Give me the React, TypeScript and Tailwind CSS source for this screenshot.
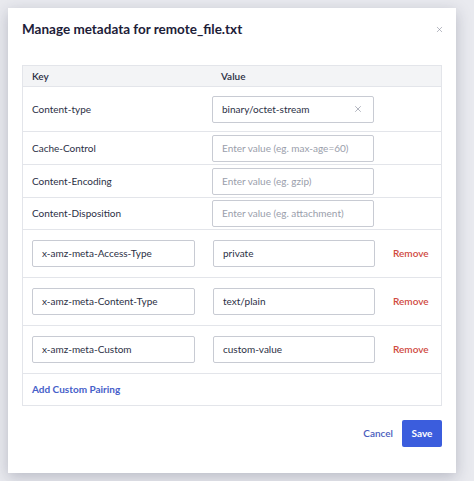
import { X } from 'lucide-react';

const fixedRows = [
  { key: 'Cache-Control', placeholder: 'Enter value (eg. max-age=60)', h: 'h-[33px]' },
  { key: 'Content-Encoding', placeholder: 'Enter value (eg. gzip)', h: 'h-[33px]' },
  { key: 'Content-Disposition', placeholder: 'Enter value (eg. attachment)', h: 'h-[32px]' },
];

const customRows = [
  { key: 'x-amz-meta-Access-Type', value: 'private', h: 'h-[48px]' },
  { key: 'x-amz-meta-Content-Type', value: 'text/plain', h: 'h-[48px]' },
  { key: 'x-amz-meta-Custom', value: 'custom-value', h: 'h-[48px]' },
];

const inputBox =
  'h-[27px] rounded-[2px] border border-[#c8cbd3] bg-white flex items-center px-[9px] text-[10px]';

export default function App() {
  return (
    <div
      className="w-[474px] h-[481px] bg-[#e9eaef] pl-[8px] pt-[8px] overflow-hidden"
      style={{ fontFamily: 'Lato, "Open Sans", sans-serif' }}
    >
      <div className="w-[448px] h-[465px] bg-white shadow-[0_4px_14px_rgba(40,45,70,0.25)] px-[14px] pt-[12px] text-[#2b2f45]">
        {/* Header */}
        <div className="flex items-center justify-between h-[18px]">
          <h2 className="text-[13.5px] font-bold text-[#1d2038]">
            Manage metadata for remote_file.txt
          </h2>
          <X className="w-[9px] h-[9px] text-[#7a7f90] mr-[-2px]" strokeWidth={1.4} />
        </div>

        {/* Table */}
        <div className="mt-[27px] border border-[#e3e5ea] text-[10px]">
          <div className="h-[20px] bg-[#f3f4f6] flex items-center font-semibold text-[#2b2f45]">
            <div className="w-[190px] pl-[9px]">Key</div>
            <div className="pl-[8px]">Value</div>
          </div>

          <div className="h-[45px] flex items-center border-t border-[#e3e5ea]">
            <div className="w-[181px] pl-[9px]">Content-type</div>
            <div className={`${inputBox} w-[162px] justify-between ml-[8px]`}>
              <span>binary/octet-stream</span>
              <X className="w-[10px] h-[10px] text-[#7a7f90] mr-[1px]" strokeWidth={1.4} />
            </div>
          </div>

          {fixedRows.map((r) => (
            <div key={r.key} className={`${r.h} flex items-center border-t border-[#e3e5ea]`}>
              <div className="w-[181px] pl-[9px]">{r.key}</div>
              <div className={`${inputBox} w-[162px] ml-[8px] text-[#9a9eab]`}>{r.placeholder}</div>
            </div>
          ))}

          {customRows.map((r) => (
            <div key={r.key} className={`${r.h} flex items-center border-t border-[#e3e5ea] pl-[9px]`}>
              <div className={`${inputBox} w-[163px]`}>{r.key}</div>
              <div className={`${inputBox} w-[162px] ml-[18px]`}>{r.value}</div>
              <button className="ml-[18px] text-[10px] font-semibold text-[#cf4a3f]">Remove</button>
            </div>
          ))}

          <div className="h-[32px] flex items-center border-t border-[#e3e5ea] pl-[9px]">
            <button className="text-[10px] font-bold text-[#4660c9]">Add Custom Pairing</button>
          </div>
        </div>

        {/* Footer */}
        <div className="mt-[14px] flex items-center justify-end gap-[9px]">
          <button className="text-[10px] font-semibold text-[#4a5cbd]">Cancel</button>
          <button className="w-[40px] h-[27px] rounded-[2px] bg-[#3b5ddd] text-white text-[10px] font-bold">
            Save
          </button>
        </div>
      </div>
    </div>
  );
}
